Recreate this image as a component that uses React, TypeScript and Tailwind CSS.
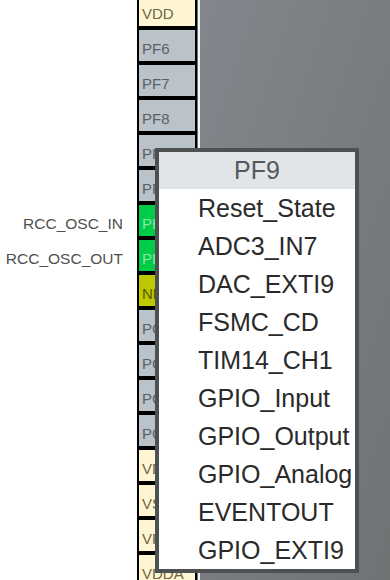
type Pin = { name: string; kind: "io" | "power" | "osc" | "reset"; label?: string };

const pins: Pin[] = [
  { name: "VDD", kind: "power" },
  { name: "PF6", kind: "io" },
  { name: "PF7", kind: "io" },
  { name: "PF8", kind: "io" },
  { name: "PF9", kind: "io" },
  { name: "PF10", kind: "io" },
  { name: "PH0", kind: "osc", label: "RCC_OSC_IN" },
  { name: "PH1", kind: "osc", label: "RCC_OSC_OUT" },
  { name: "NRST", kind: "reset" },
  { name: "PC0", kind: "io" },
  { name: "PC1", kind: "io" },
  { name: "PC2", kind: "io" },
  { name: "PC3", kind: "io" },
  { name: "VDD", kind: "power" },
  { name: "VSSA", kind: "power" },
  { name: "VREF+", kind: "power" },
  { name: "VDDA", kind: "power" },
];

const cellStyle: Record<Pin["kind"], string> = {
  io: "bg-[#b9c3c9] text-[#5b6166]",
  power: "bg-[#fff5d2] text-[#6d6748]",
  osc: "bg-[#00cc48] text-[#8be8a8]",
  reset: "bg-[#bec800] text-[#585a00]",
};

const modes = [
  "Reset_State",
  "ADC3_IN7",
  "DAC_EXTI9",
  "FSMC_CD",
  "TIM14_CH1",
  "GPIO_Input",
  "GPIO_Output",
  "GPIO_Analog",
  "EVENTOUT",
  "GPIO_EXTI9",
];

export default function App() {
  return (
    <div className="relative w-[390px] h-[580px] overflow-hidden flex bg-white font-['Liberation_Sans',Arial,sans-serif]">
      {/* signal labels */}
      <div className="w-[137px] flex flex-col gap-[4px] -mt-[5px]">
        {pins.map((p, i) => (
          <div
            key={i}
            className="h-[31px] shrink-0 pt-[11px] pr-[14px] text-right text-[15.5px] leading-none text-[#4f4f4f] whitespace-nowrap"
          >
            {p.label ?? ""}
          </div>
        ))}
      </div>

      {/* pin column */}
      <div className="w-[60px] bg-black px-[2px]">
        <div className="flex flex-col gap-[4px] -mt-[5px]">
          {pins.map((p, i) => (
            <div
              key={i}
              className={`h-[31px] shrink-0 overflow-hidden whitespace-nowrap pl-[3px] pt-[11px] text-[15px] leading-none ${cellStyle[p.kind]}`}
            >
              {p.name}
            </div>
          ))}
        </div>
      </div>

      {/* chip edge */}
      <div className="w-[1px] bg-[#6c7074]" />
      <div className="w-[2px] bg-[#f2f3f4]" />

      {/* chip body */}
      <div className="flex-1 bg-gradient-to-br from-[#83878d] to-[#6e7374]" />

      {/* pin mode popup */}
      <div className="absolute left-[155px] top-[148px] w-[204px] border-4 border-[#4d5151] bg-white overflow-hidden">
        <div className="h-[37px] bg-[#e1e5e8] flex items-center justify-center text-[25px] leading-none text-[#55595d]">
          PF9
        </div>
        {modes.map((m) => (
          <div
            key={m}
            className="h-[38px] flex items-center pl-[39px] text-[25px] leading-none text-[#2a2a2a] whitespace-nowrap"
          >
            {m}
          </div>
        ))}
      </div>
    </div>
  );
}
